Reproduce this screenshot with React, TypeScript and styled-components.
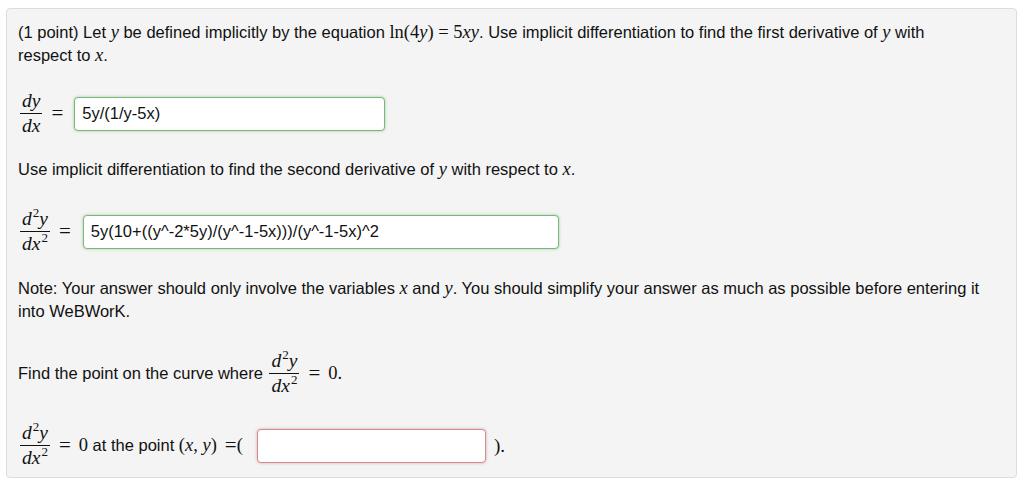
import { createGlobalStyle, styled } from "styled-components";

const GlobalStyle = createGlobalStyle`
  html, body {
    margin: 0;
    padding: 0;
    background: #ffffff;
  }
  body {
    font-family: "Liberation Sans", Arial, sans-serif;
    font-size: 16.5px;
    color: #111;
  }
`;

const Page = styled.div`
  padding: 8px 7px 13px 6px;
`;

const Panel = styled.div`
  background: #f4f4f4;
  border: 1px solid #dcdcdc;
  border-radius: 4px;
  padding: 12px 18px 8px 11px;
`;

const Para = styled.p<{ $gap?: number }>`
  margin: ${(p) => p.$gap ?? 0}px 0 0 0;
  line-height: 23px;
`;

const M = styled.span`
  font-family: "Liberation Serif", "Times New Roman", serif;
  font-style: italic;
  font-size: 18.5px;
`;

const Up = styled.span`
  font-family: "Liberation Serif", "Times New Roman", serif;
  font-style: normal;
  font-size: 18.5px;
`;

const Row = styled.div<{ $gap: number }>`
  display: flex;
  align-items: center;
  margin-top: ${(p) => p.$gap}px;
`;

const Frac = styled.span`
  display: inline-flex;
  flex-direction: column;
  align-items: center;
  font-family: "Liberation Serif", "Times New Roman", serif;
  font-style: italic;
  font-size: 19.5px;
  line-height: 22px;
  margin: 0 1px 0 2px;
`;

const Num = styled.span`
  padding: 0 2px 1px;
  border-bottom: 1px solid #111;
`;

const Den = styled.span`
  padding: 1px 2px 0;
`;

const Sup = styled.sup`
  font-style: normal;
  font-size: 13px;
  line-height: 0;
  vertical-align: 8px;
  margin-left: 1px;
`;

const Rel = styled.span<{ $after?: number }>`
  font-family: "Liberation Serif", "Times New Roman", serif;
  font-size: 21px;
  margin: 0 ${(p) => p.$after ?? 8}px 0 8px;
`;

const Answer = styled.div<{ $w: number; $state: "ok" | "bad"; $lead?: number }>`
  box-sizing: border-box;
  width: ${(p) => p.$w}px;
  height: 34px;
  margin-left: ${(p) => p.$lead ?? 0}px;
  background: #ffffff;
  border: 1px solid ${(p) => (p.$state === "ok" ? "#79b879" : "#d38b8c")};
  border-radius: 4px;
  box-shadow: 0 0 3px
    ${(p) => (p.$state === "ok" ? "rgba(90, 170, 90, 0.55)" : "rgba(200, 90, 90, 0.5)")};
  padding: 0 7px;
  display: flex;
  align-items: center;
  font-size: 16.5px;
  color: #111;
`;

const Tail = styled.span`
  font-family: "Liberation Serif", "Times New Roman", serif;
  font-size: 19px;
  margin-left: 8px;
`;

const D2 = () => (
  <Frac>
    <Num>
      d<Sup>2</Sup>y
    </Num>
    <Den>
      dx<Sup>2</Sup>
    </Den>
  </Frac>
);

export default function App() {
  return (
    <Page>
      <GlobalStyle />
      <Panel>
        <Para>
          (1 point) Let <M>y</M> be defined implicitly by the equation{" "}
          <Up>ln(4</Up>
          <M>y</M>
          <Up>) = 5</Up>
          <M>xy</M>. Use implicit differentiation to find the first derivative of{" "}
          <M>y</M> with
          <br />
          respect to <M>x</M>.
        </Para>

        <Row $gap={23}>
          <Frac>
            <Num>dy</Num>
            <Den>dx</Den>
          </Frac>
          <Rel $after={11}>=</Rel>
          <Answer $w={311} $state="ok">
            5y/(1/y-5x)
          </Answer>
        </Row>

        <Para $gap={21}>
          Use implicit differentiation to find the second derivative of <M>y</M> with
          respect to <M>x</M>.
        </Para>

        <Row $gap={27}>
          <D2 />
          <Rel $after={12}>=</Rel>
          <Answer $w={476} $state="ok">
            5y(10+((y^-2*5y)/(y^-1-5x)))/(y^-1-5x)^2
          </Answer>
        </Row>

        <Para $gap={22}>
          Note: Your answer should only involve the variables <M>x</M> and <M>y</M>. You
          should simplify your answer as much as possible before entering it
          <br />
          into WeBWorK.
        </Para>

        <Row $gap={27}>
          <span>Find the point on the curve where&nbsp;</span>
          <D2 />
          <Rel>=</Rel>
          <Up>0.</Up>
        </Row>

        <Row $gap={25}>
          <D2 />
          <Rel>=</Rel>
          <Up>0</Up>
          <span>&nbsp;at the point&nbsp;</span>
          <Up>(</Up>
          <M>x</M>
          <Up>,&nbsp;</Up>
          <M>y</M>
          <Up>)</Up>
          <Rel $after={0}>=</Rel>
          <Up>(</Up>
          <Answer $w={229} $state="bad" $lead={14} />
          <Tail>).</Tail>
        </Row>
      </Panel>
    </Page>
  );
}
